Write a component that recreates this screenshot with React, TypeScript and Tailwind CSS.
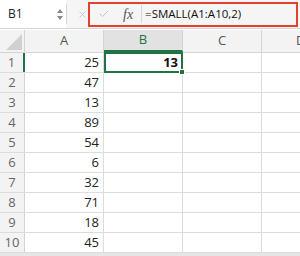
import { X, Check } from 'lucide-react';

const values = [25, 47, 13, 89, 54, 6, 32, 71, 18, 45];
const cols = ['A', 'B', 'C'];

export default function App() {
  return (
    <div className="flex h-[256px] w-[300px] flex-col overflow-hidden bg-white font-['Open_Sans','Liberation_Sans',sans-serif] text-[#222]">
      {/* formula bar */}
      <div className="flex h-[29px] shrink-0 items-center border-b border-[#d4d4d4] bg-[#f5f5f5]">
        <div className="flex h-full w-[66px] items-center justify-between bg-white pl-[8px] pr-[3px] text-[12px]">
          <span>B1</span>
          <div className="flex flex-col items-center gap-[3px]">
            <div className="h-0 w-0 border-x-[3px] border-b-[4px] border-x-transparent border-b-[#888]" />
            <div className="h-0 w-0 border-x-[3px] border-t-[4px] border-x-transparent border-t-[#888]" />
          </div>
        </div>
        <div className="h-[20px] w-px bg-[#d6d6d6]" />
        <X className="ml-[10px] h-[11px] w-[11px] text-[#c4c4c4]" strokeWidth={2} />
        <div className="ml-[0px] mr-[2px] flex h-[25px] flex-1 items-center border-2 border-[#e2412f]">
          <Check className="ml-[8px] h-[12px] w-[12px] text-[#c4c4c4]" strokeWidth={2} />
          <span className="ml-[13px] font-['Liberation_Serif',serif] text-[14px] italic text-[#555]">fx</span>
          <div className="ml-[8px] h-[18px] w-px bg-[#d6d6d6]" />
          <span className="ml-[3px] text-[11.5px] text-[#111]">=SMALL(A1:A10,2)</span>
        </div>
      </div>

      {/* column headers */}
      <div className="mt-[1px] flex h-[23px] shrink-0 border-b border-[#d4d4d4] bg-[#f3f3f3] text-[13px] text-[#555]">
        <div className="relative w-[25px] shrink-0 border-r border-[#d4d4d4]">
          <div className="absolute bottom-[2px] right-[2px] h-0 w-0 border-b-[16px] border-l-[16px] border-b-[#d0d0d0] border-l-transparent" />
        </div>
        {cols.map((c) => (
          <div
            key={c}
            className={`flex w-[79px] shrink-0 items-center justify-center border-r border-[#d4d4d4] ${
              c === 'B' ? 'border-b-2 border-b-[#217346] bg-[#e2e2e2] text-[#217346]' : ''
            }`}
          >
            {c}
          </div>
        ))}
        <div className="flex flex-1 items-center pl-[34px]">D</div>
      </div>

      {/* rows */}
      {values.map((v, i) => (
        <div key={i} className="flex h-[20px] shrink-0 border-b border-[#dcdcdc] text-[13px]">
          <div
            className={`flex w-[25px] shrink-0 items-center justify-center bg-[#f3f3f3] text-[#666] ${
              i === 0 ? 'border-r-2 border-[#217346] bg-[#e2e2e2]' : 'border-r border-[#d4d4d4]'
            }`}
          >
            {i + 1}
          </div>
          <div className="flex w-[79px] shrink-0 items-center justify-end border-r border-[#dcdcdc] pr-[4px] font-medium text-[#222]">
            {v}
          </div>
          {i === 0 ? (
            <div className="relative -my-px flex w-[79px] shrink-0 items-center justify-end border-2 border-[#217346] pr-[3px] font-bold text-[#111]">
              13
              <div className="absolute -bottom-[4px] -right-[4px] h-[6px] w-[6px] border border-white bg-[#217346]" />
            </div>
          ) : (
            <div className="w-[79px] shrink-0 border-r border-[#dcdcdc]" />
          )}
          <div className="w-[79px] shrink-0 border-r border-[#dcdcdc]" />
          <div className="flex-1" />
        </div>
      ))}
      <div className="flex-1 bg-[#e6e6e6]" />
    </div>
  );
}
